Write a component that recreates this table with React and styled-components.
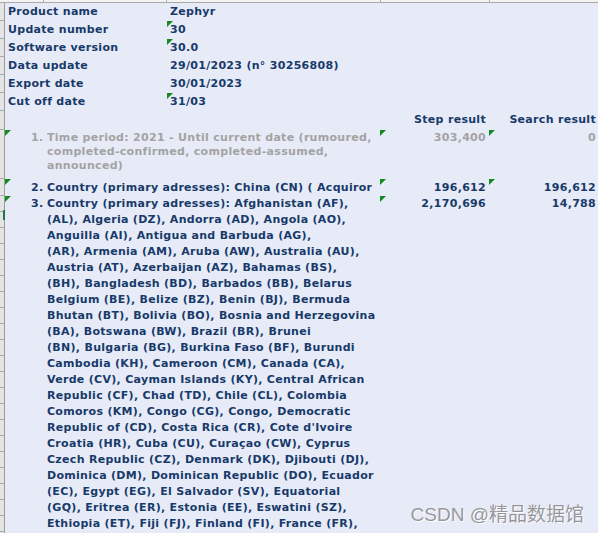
import React from 'react';
import styled, { createGlobalStyle } from 'styled-components';

const GlobalStyle = createGlobalStyle`
  html, body {
    margin: 0;
    padding: 0;
    background: #e7ebf7;
    overflow: hidden;
  }
`;

const NAVY = '#173a6a';
const GREY = '#a3a3a3';

const Sheet = styled.div`
  position: relative;
  width: 598px;
  height: 533px;
  overflow: hidden;
  background: #e7ebf7;
  font-family: 'DejaVu Sans', Verdana, sans-serif;
  font-size: 11px;
  font-weight: bold;
  letter-spacing: 0.3px;
  color: ${NAVY};
`;

const TopStrip = styled.div`
  display: grid;
  grid-template-columns: 44px 123px 214px 109px 1fr;
  height: 3px;
  background: #f3f3f3;
  border-bottom: 1px solid #a9a9a9;
  box-sizing: border-box;
`;

const TopCell = styled.div`
  border-right: 1px solid #b4b4b4;
`;

const Row = styled.div`
  display: grid;
  grid-template-columns: 5px 162px 213px 109px 109px;
  height: ${(p) => p.$h}px;
`;

const Gutter = styled.div`
  position: relative;
  background: ${(p) =>
    p.$ruled
      ? 'repeating-linear-gradient(to bottom, #e4e4e4 0 15px, #a9a9a9 15px 16px)'
      : '#e4e4e4'};
  border-right: 1px solid #9c9c9c;
  border-bottom: ${(p) => (p.$ruled ? 'none' : '1px solid #a9a9a9')};
  box-sizing: border-box;

  &::after {
    content: '';
    display: ${(p) => (p.$active ? 'block' : 'none')};
    position: absolute;
    top: 14px;
    right: -1px;
    width: 2px;
    height: 10px;
    background: #1d7a3c;
  }
`;

const Cell = styled.div`
  position: relative;
  padding: ${(p) => p.$pt || 0}px ${(p) => (p.$right ? p.$pr || 3 : 0)}px 0
    ${(p) => p.$pl ?? 3}px;
  line-height: ${(p) => p.$lh || 18}px;
  white-space: nowrap;
  overflow: ${(p) => (p.$clip ? 'hidden' : 'visible')};
  text-align: ${(p) => (p.$right ? 'right' : 'left')};
  color: ${(p) => (p.$muted ? GREY : NAVY)};
  grid-column: ${(p) => p.$span || 'auto'};

  &::before {
    content: '';
    display: ${(p) => (p.$flag ? 'block' : 'none')};
    position: absolute;
    top: 0;
    left: 0;
    width: 0;
    height: 0;
    border-top: 6px solid #138a1e;
    border-right: 6px solid transparent;
  }
`;

const Item = styled(Cell)`
  display: flex;
  padding-left: 26px;
`;

const Num = styled.span`
  width: 16px;
  flex: none;
`;

const Lines = styled.div`
  display: flex;
  flex-direction: column;
  min-width: 0;
  overflow: hidden;
`;

const Watermark = styled.div`
  position: absolute;
  right: 14px;
  bottom: 7px;
  font-family: 'Liberation Sans', 'Noto Sans CJK SC', sans-serif;
  font-weight: normal;
  font-size: 19px;
  letter-spacing: 0;
  color: rgba(120, 120, 120, 0.75);
  text-shadow: 1px 1px 0 rgba(255, 255, 255, 0.9);
  white-space: nowrap;
`;

const header = [
  ['Product name', 'Zephyr', false],
  ['Update number', '30', true],
  ['Software version', '30.0', true],
  ['Data update', '29/01/2023 (n° 30256808)', false],
  ['Export date', '30/01/2023', false],
  ['Cut off date', '31/03', true],
];

const item1 = [
  'Time period: 2021 - Until current date (rumoured,',
  'completed-confirmed, completed-assumed,',
  'announced)',
];

const item3 = [
  'Country (primary adresses): Afghanistan (AF),',
  '(AL), Algeria (DZ), Andorra (AD), Angola (AO),',
  'Anguilla (AI), Antigua and Barbuda (AG),',
  '(AR), Armenia (AM), Aruba (AW), Australia (AU),',
  'Austria (AT), Azerbaijan (AZ), Bahamas (BS),',
  '(BH), Bangladesh (BD), Barbados (BB), Belarus',
  'Belgium (BE), Belize (BZ), Benin (BJ), Bermuda',
  'Bhutan (BT), Bolivia (BO), Bosnia and Herzegovina',
  '(BA), Botswana (BW), Brazil (BR), Brunei',
  '(BN), Bulgaria (BG), Burkina Faso (BF), Burundi',
  'Cambodia (KH), Cameroon (CM), Canada (CA),',
  'Verde (CV), Cayman Islands (KY), Central African',
  'Republic (CF), Chad (TD), Chile (CL), Colombia',
  'Comoros (KM), Congo (CG), Congo, Democratic',
  "Republic of (CD), Costa Rica (CR), Cote d'Ivoire",
  'Croatia (HR), Cuba (CU), Curaçao (CW), Cyprus',
  'Czech Republic (CZ), Denmark (DK), Djibouti (DJ),',
  'Dominica (DM), Dominican Republic (DO), Ecuador',
  '(EC), Egypt (EG), El Salvador (SV), Equatorial',
  '(GQ), Eritrea (ER), Estonia (EE), Eswatini (SZ),',
  'Ethiopia (ET), Fiji (FJ), Finland (FI), France (FR),',
];

const App = () => {
  return (
    <Sheet>
      <GlobalStyle />
      <TopStrip>
        <TopCell />
        <TopCell />
        <TopCell />
        <TopCell />
        <div />
      </TopStrip>

      {header.map(([label, value, flag]) => (
        <Row key={label} $h={18}>
          <Gutter />
          <Cell>{label}</Cell>
          <Cell $flag={flag}>{value}</Cell>
          <div />
          <div />
        </Row>
      ))}

      <Row $h={19}>
        <Gutter />
        <div />
        <div />
        <Cell $right $pt={1} $lh={16}>Step result</Cell>
        <Cell $right $pr={2} $pt={1} $lh={16}>Search result</Cell>
      </Row>

      <Row $h={49}>
        <Gutter />
        <Item $span="2 / 4" $flag $muted $pt={1} $lh={14}>
          <Num>1.</Num>
          <Lines>
            {item1.map((l) => (
              <span key={l}>{l}</span>
            ))}
          </Lines>
        </Item>
        <Cell $right $flag $muted $pt={1} $lh={14}>303,400</Cell>
        <Cell $right $pr={2} $flag $muted $pt={1} $lh={14}>0</Cell>
      </Row>

      <Row $h={17}>
        <Gutter />
        <Item $span="2 / 4" $flag $clip $pt={1} $lh={16}>
          <Num>2.</Num>
          <Lines>
            <span>Country (primary adresses): China (CN) ( Acquiror</span>
          </Lines>
        </Item>
        <Cell $right $flag $pt={1} $lh={16}>196,612</Cell>
        <Cell $right $pr={2} $flag $pt={1} $lh={16}>196,612</Cell>
      </Row>

      <Row $h={337}>
        <Gutter $ruled $active />
        <Item $span="2 / 4" $flag $clip $lh={16}>
          <Num>3.</Num>
          <Lines>
            {item3.map((l) => (
              <span key={l}>{l}</span>
            ))}
          </Lines>
        </Item>
        <Cell $right $flag $lh={16}>2,170,696</Cell>
        <Cell $right $pr={2} $lh={16}>14,788</Cell>
      </Row>

      <Watermark>CSDN @精品数据馆</Watermark>
    </Sheet>
  );
};

export default App;
